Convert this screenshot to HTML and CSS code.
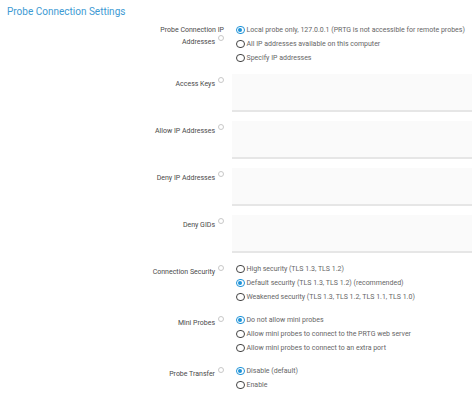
FILE: index.html
```html
<!DOCTYPE html>
<html>
<head>
<meta charset="utf-8">
<link rel="stylesheet" href="styles.css">
</head>
<body>
<h1 class="title">Probe Connection Settings</h1>
<div class="form">
  <div class="row radios">
    <div class="label">Probe Connection IP<br>Addresses<span class="info"></span></div>
    <div class="field">
      <div class="opt"><span class="radio on"></span>Local probe only, 127.0.0.1 (PRTG is not accessible for remote probes)</div>
      <div class="opt"><span class="radio"></span>All IP addresses available on this computer</div>
      <div class="opt"><span class="radio"></span>Specify IP addresses</div>
    </div>
  </div>
  <div class="row area">
    <div class="label">Access Keys<span class="info"></span></div>
    <div class="field"><div class="textarea"></div></div>
  </div>
  <div class="row area">
    <div class="label">Allow IP Addresses<span class="info"></span></div>
    <div class="field"><div class="textarea"></div></div>
  </div>
  <div class="row area">
    <div class="label">Deny IP Addresses<span class="info"></span></div>
    <div class="field"><div class="textarea"></div></div>
  </div>
  <div class="row area">
    <div class="label">Deny GIDs<span class="info"></span></div>
    <div class="field"><div class="textarea"></div></div>
  </div>
  <div class="row radios">
    <div class="label">Connection Security<span class="info"></span></div>
    <div class="field">
      <div class="opt"><span class="radio"></span>High security (TLS 1.3, TLS 1.2)</div>
      <div class="opt"><span class="radio on"></span>Default security (TLS 1.3, TLS 1.2) (recommended)</div>
      <div class="opt"><span class="radio"></span>Weakened security (TLS 1.3, TLS 1.2, TLS 1.1, TLS 1.0)</div>
    </div>
  </div>
  <div class="row radios">
    <div class="label">Mini Probes<span class="info"></span></div>
    <div class="field">
      <div class="opt"><span class="radio on"></span>Do not allow mini probes</div>
      <div class="opt"><span class="radio"></span>Allow mini probes to connect to the PRTG web server</div>
      <div class="opt"><span class="radio"></span>Allow mini probes to connect to an extra port</div>
    </div>
  </div>
  <div class="row radios">
    <div class="label">Probe Transfer<span class="info"></span></div>
    <div class="field">
      <div class="opt"><span class="radio on"></span>Disable (default)</div>
      <div class="opt"><span class="radio"></span>Enable</div>
    </div>
  </div>
</div>
</body>
</html>
```
FILE: styles.css
```css
body {
  margin: 0;
  font-family: Roboto, "Liberation Sans", sans-serif;
  background: #fff;
}
.title {
  margin: 0;
  padding: 5px 7px 0;
  height: 18px;
  font-size: 10px;
  line-height: 14px;
  font-weight: 400;
  color: #3d9ad3;
}
.form {
  display: flex;
  flex-direction: column;
}
.row {
  display: flex;
  margin-bottom: 9px;
}
.label {
  width: 224px;
  flex: none;
  text-align: right;
  font-size: 7px;
  line-height: 8.5px;
  font-weight: 400;
  color: #4a4a4a;
  padding-top: 3px;
}
.info {
  display: inline-block;
  width: 4px;
  height: 4px;
  border: 0.8px solid #c8c8c8;
  border-radius: 50%;
  margin-left: 3px;
  vertical-align: 2.5px;
}
.field {
  flex: 1;
  margin-left: 8px;
  margin-right: 2px;
}
.opt {
  display: flex;
  align-items: center;
  height: 14px;
  font-size: 7px;
  color: #666;
  padding-left: 4px;
}
.radio {
  width: 6.5px;
  height: 6.5px;
  border: 1px solid #444;
  border-radius: 50%;
  margin-right: 2px;
  flex: none;
  position: relative;
}
.radio.on {
  border-color: #1f93d8;
}
.radio.on::after {
  content: "";
  position: absolute;
  left: 1.25px;
  top: 1.25px;
  width: 4px;
  height: 4px;
  border-radius: 50%;
  background: #1f93d8;
}
.textarea {
  height: 36px;
  background: #fafafa;
  border-bottom: 2px solid #e6e6e6;
}
```
